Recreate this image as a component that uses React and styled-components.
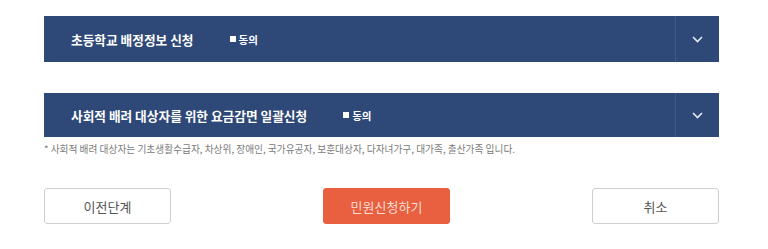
import React from 'react'
import styled, { createGlobalStyle } from 'styled-components'

const GlobalStyle = createGlobalStyle`
    html, body {
        margin: 0;
        padding: 0;
        background: #ffffff;
        font-family: "Noto Sans CJK KR", "Noto Sans", sans-serif;
    }
`

const Page = styled.div`
    width: 675px;
    padding: 16px 0 0 44px;
    display: flex;
    flex-direction: column;
`

const Panel = styled.div`
    height: ${({ $h }) => $h}px;
    margin-top: ${({ $mt }) => $mt || 0}px;
    background: #2e4877;
    display: flex;
    align-items: center;
`

const PanelBody = styled.div`
    flex: 1;
    display: flex;
    align-items: center;
    gap: 36px;
    padding-left: 27px;
`

const Title = styled.div`
    font-size: 12.7px;
    font-weight: 700;
    color: #ffffff;
`

const Agree = styled.label`
    display: flex;
    align-items: center;
    gap: 3px;
    font-size: 10.5px;
    font-weight: 700;
    color: #ffffff;
`

const Box = styled.span`
    width: 6px;
    height: 6px;
    background: #ffffff;
`

const Toggle = styled.div`
    width: 43px;
    height: 100%;
    border-left: 1px solid #3f5a88;
    display: flex;
    align-items: center;
    justify-content: center;
`

const Note = styled.p`
    margin: 6px 0 0;
    font-size: 9.7px;
    line-height: 12px;
    color: #7a7a7a;
`

const Actions = styled.div`
    margin-top: 33px;
    display: flex;
    justify-content: space-between;
`

const Button = styled.button`
    width: 127px;
    height: 36px;
    border-radius: 3px;
    font-family: inherit;
    font-size: 13px;
    cursor: pointer;
    border: 1px solid ${({ $primary }) => ($primary ? '#e8603f' : '#cfcfcf')};
    background: ${({ $primary }) => ($primary ? '#e8603f' : '#ffffff')};
    color: ${({ $primary }) => ($primary ? '#f9ddd4' : '#555555')};
    margin-left: ${({ $primary }) => ($primary ? '10px' : '0')};
`

const Chevron = () => (
    <svg width="11" height="7" viewBox="0 0 11 7">
        <path d="M1 1l4.5 4.5L10 1" fill="none" stroke="#e6ecf6" strokeWidth="1.6" />
    </svg>
)

const AgreePanel = ({ title, h, mt }) => (
    <Panel $h={h} $mt={mt}>
        <PanelBody>
            <Title>{title}</Title>
            <Agree>
                <Box />
                동의
            </Agree>
        </PanelBody>
        <Toggle>
            <Chevron />
        </Toggle>
    </Panel>
)

const App = () => (
    <>
        <GlobalStyle />
        <Page>
            <AgreePanel title="초등학교 배정정보 신청" h={46} />
            <AgreePanel title="사회적 배려 대상자를 위한 요금감면 일괄신청" h={44} mt={31} />
            <Note>* 사회적 배려 대상자는 기초생활수급자, 차상위, 장애인, 국가유공자, 보훈대상자, 다자녀가구, 대가족, 출산가족 입니다.</Note>
            <Actions>
                <Button>이전단계</Button>
                <Button $primary>민원신청하기</Button>
                <Button>취소</Button>
            </Actions>
        </Page>
    </>
)

export default App
